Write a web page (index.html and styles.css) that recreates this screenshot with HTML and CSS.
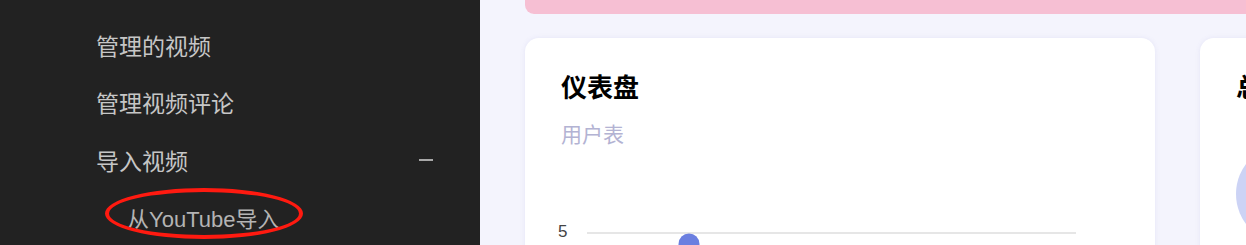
FILE: index.html
```html
<!DOCTYPE html>
<html lang="zh">
<head>
<meta charset="utf-8">
<link rel="stylesheet" href="styles.css">
</head>
<body>
<div class="app">
  <aside class="sidebar">
    <div class="nav-item">管理的视频</div>
    <div class="nav-item">管理视频评论</div>
    <div class="nav-item nav-group">导入视频<span class="collapse"></span></div>
    <div class="nav-sub">从YouTube导入<span class="mark"></span></div>
  </aside>
  <main class="main">
    <div class="banner"></div>
    <div class="cards">
      <section class="card card-wide">
        <h2 class="card-title">仪表盘</h2>
        <p class="card-sub">用户表</p>
        <svg class="chart" width="560" height="60" viewBox="0 0 560 60">
          <text x="3" y="27" class="axis">5</text>
          <line x1="32" y1="23" x2="521" y2="23" stroke="#e6e6e6" stroke-width="2"/>
          <circle cx="134" cy="34" r="10.5" fill="#6b7fe0"/>
        </svg>
      </section>
      <section class="card card-side">
        <h2 class="card-title">总</h2>
        <svg class="donut" width="100" height="100" viewBox="0 0 100 100">
          <circle cx="50" cy="50" r="50" fill="#ccd3f5"/>
        </svg>
      </section>
    </div>
  </main>
</div>
</body>
</html>
```
FILE: styles.css
```css
html, body {
  margin: 0;
  padding: 0;
  height: 245px;
  overflow: hidden;
  font-family: "Liberation Sans", "Noto Sans CJK SC", sans-serif;
}
.app {
  display: flex;
  height: 245px;
}
.sidebar {
  width: 480px;
  flex: none;
  background: #222222;
  padding-top: 16px;
  box-sizing: border-box;
}
.nav-item {
  height: 57.5px;
  display: flex;
  align-items: center;
  justify-content: space-between;
  padding: 0 47px 0 96px;
  font-size: 23px;
  color: #c6c6c6;
}
.collapse {
  width: 14px;
  height: 2px;
  background: #a8a8a8;
}
.nav-sub {
  position: relative;
  height: 56px;
  display: flex;
  align-items: center;
  padding-left: 127px;
  font-size: 22px;
  color: #b4b4b4;
}
.mark {
  position: absolute;
  left: 105px;
  top: -1px;
  width: 198px;
  height: 51px;
  box-sizing: border-box;
  border: 4.5px solid #ff1a10;
  border-radius: 50%;
}
.main {
  flex: 1;
  background: #f4f4fd;
  padding-left: 45px;
  overflow: hidden;
}
.banner {
  height: 14px;
  background: #f6bfd3;
  border-bottom-left-radius: 9px;
}
.cards {
  display: flex;
  gap: 45px;
  margin-top: 24px;
}
.card {
  background: #ffffff;
  border-radius: 14px;
  box-shadow: 0 0 5px rgba(120, 120, 200, 0.12);
  height: 260px;
  box-sizing: border-box;
  padding: 35px 0 0 36px;
  flex: none;
}
.card-wide {
  width: 630px;
}
.card-side {
  width: 300px;
  overflow: hidden;
}
.card-title {
  margin: 0;
  font-size: 26px;
  line-height: 31px;
  font-weight: 700;
  color: #000;
}
.card-sub {
  margin: 18px 0 0;
  font-size: 21px;
  line-height: 25px;
  color: #b3b3d3;
}
.chart {
  display: block;
  margin: 63px 0 0 -6px;
}
.axis {
  font-size: 17px;
  fill: #444;
  font-family: "Liberation Sans", sans-serif;
}
.donut {
  display: block;
  margin: 40px 0 0 0;
}
```
